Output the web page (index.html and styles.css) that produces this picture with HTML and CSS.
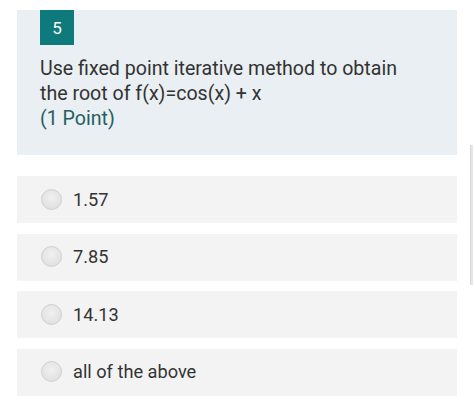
FILE: index.html
```html
<!DOCTYPE html>
<html>
<head>
<meta charset="utf-8">
<link rel="stylesheet" href="styles.css">
</head>
<body>
<div class="page">
  <div class="question">
    <div class="badge">5</div>
    <div class="qtext">Use fixed point iterative method to obtain<br>the root of f(x)=cos(x) + x<br><span class="points">(1 Point)</span></div>
  </div>
  <div class="options">
    <div class="option"><span class="radio"></span><span class="label">1.57</span></div>
    <div class="option"><span class="radio"></span><span class="label">7.85</span></div>
    <div class="option"><span class="radio"></span><span class="label">14.13</span></div>
    <div class="option"><span class="radio"></span><span class="label">all of the above</span></div>
  </div>
  <div class="scrollbar"></div>
</div>
</body>
</html>
```
FILE: styles.css
```css
html, body {
  margin: 0;
  padding: 0;
  background: #ffffff;
}
body {
  font-family: Roboto, "Noto Sans", sans-serif;
  color: #333333;
  width: 474px;
  height: 410px;
  overflow: hidden;
}
.page {
  position: relative;
  padding: 10px 0 0 17px;
}
.question {
  width: 440px;
  background: #e9eff2;
  padding: 0 0 24px 23px;
  box-sizing: border-box;
}
.badge {
  width: 34px;
  height: 35px;
  background: #0f7a7b;
  color: #ffffff;
  font-size: 17px;
  display: flex;
  align-items: center;
  justify-content: center;
}
.qtext {
  margin-top: 11px;
  font-size: 19.6px;
  line-height: 25px;
  color: #333333;
}
.points {
  color: #245f60;
}
.options {
  margin-top: 21px;
  display: flex;
  flex-direction: column;
  gap: 11.5px;
  width: 440px;
}
.option {
  height: 46px;
  background: #f3f3f3;
  box-shadow: 0 1px 1px rgba(0, 0, 0, 0.04);
  display: flex;
  align-items: center;
  padding-left: 24px;
}
.radio {
  width: 19px;
  height: 19px;
  border-radius: 50%;
  border: 1px solid #cfcfcf;
  background: radial-gradient(circle at 50% 40%, #f0f0f0 0%, #e2e2e2 70%, #d8d8d8 100%);
  flex: none;
}
.label {
  margin-left: 11px;
  font-size: 18.2px;
  color: #333333;
}
.scrollbar {
  position: absolute;
  left: 470px;
  top: 145px;
  width: 2px;
  height: 140px;
  background: #e6e6e6;
  border-left: 1px solid #d9d9d9;
}
```
